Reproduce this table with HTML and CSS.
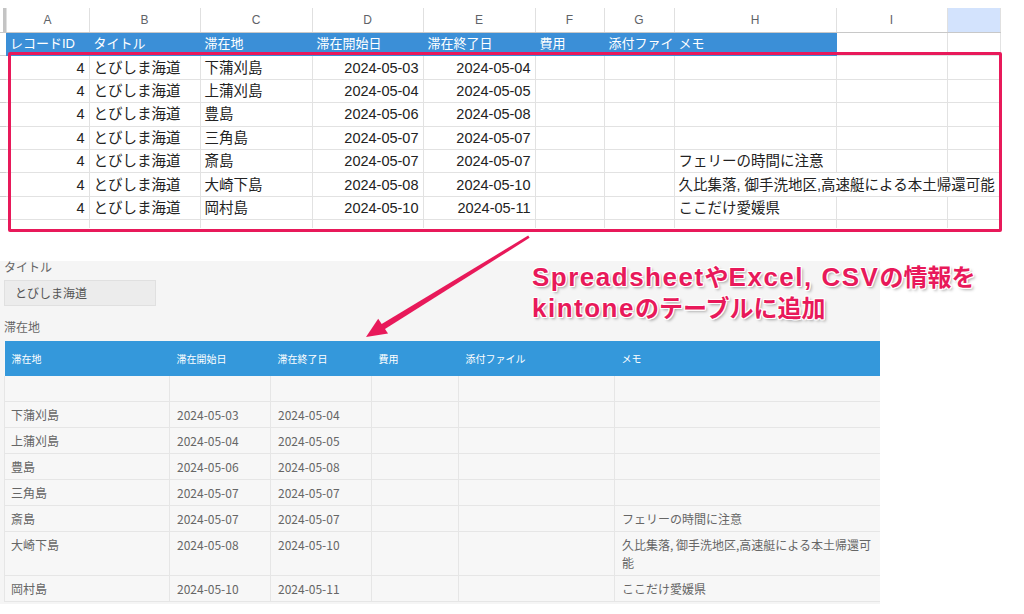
FILE: index.html
```html
<!DOCTYPE html>
<html lang="ja">
<head>
<meta charset="utf-8">
<link rel="stylesheet" href="styles.css">
</head>
<body>
<div class="page">
  <table class="sheet">
    <colgroup>
      <col style="width:6px"><col style="width:83px"><col style="width:111px"><col style="width:112px"><col style="width:111px"><col style="width:112px"><col style="width:69px"><col style="width:70px"><col style="width:162px"><col style="width:111px"><col style="width:53px"><col style="width:24px">
    </colgroup>
    <tr class="letters">
      <td class="stub stub-head"></td><td>A</td><td>B</td><td>C</td><td>D</td><td>E</td><td>F</td><td>G</td><td>H</td><td>I</td><td class="sel"></td><td class="void"></td>
    </tr>
    <tr class="blue">
      <td class="stub"></td><td class="bh">レコードID</td><td class="bh">タイトル</td><td class="bh">滞在地</td><td class="bh">滞在開始日</td><td class="bh">滞在終了日</td><td class="bh">費用</td><td class="bh">添付ファイル</td><td class="bh">メモ</td><td></td><td></td><td class="void"></td>
    </tr>
    <tr><td class="stub"></td><td class="r">4</td><td>とびしま海道</td><td>下蒲刈島</td><td class="r">2024-05-03</td><td class="r">2024-05-04</td><td></td><td></td><td></td><td></td><td></td><td class="void"></td></tr>
    <tr><td class="stub"></td><td class="r">4</td><td>とびしま海道</td><td>上蒲刈島</td><td class="r">2024-05-04</td><td class="r">2024-05-05</td><td></td><td></td><td></td><td></td><td></td><td class="void"></td></tr>
    <tr><td class="stub"></td><td class="r">4</td><td>とびしま海道</td><td>豊島</td><td class="r">2024-05-06</td><td class="r">2024-05-08</td><td></td><td></td><td></td><td></td><td></td><td class="void"></td></tr>
    <tr><td class="stub"></td><td class="r">4</td><td>とびしま海道</td><td>三角島</td><td class="r">2024-05-07</td><td class="r">2024-05-07</td><td></td><td></td><td></td><td></td><td></td><td class="void"></td></tr>
    <tr><td class="stub"></td><td class="r">4</td><td>とびしま海道</td><td>斎島</td><td class="r">2024-05-07</td><td class="r">2024-05-07</td><td></td><td></td><td>フェリーの時間に注意</td><td></td><td></td><td class="void"></td></tr>
    <tr><td class="stub"></td><td class="r">4</td><td>とびしま海道</td><td>大崎下島</td><td class="r">2024-05-08</td><td class="r">2024-05-10</td><td></td><td></td><td colspan="3" class="over">久比集落, 御手洗地区,高速艇による本土帰還可能</td><td class="void"></td></tr>
    <tr><td class="stub"></td><td class="r">4</td><td>とびしま海道</td><td>岡村島</td><td class="r">2024-05-10</td><td class="r">2024-05-11</td><td></td><td></td><td>ここだけ愛媛県</td><td></td><td></td><td class="void"></td></tr>
    <tr class="tail"><td class="stub"></td><td></td><td></td><td></td><td></td><td></td><td></td><td></td><td></td><td></td><td></td><td class="void"></td></tr>
  </table>

  <section class="kintone">
    <div class="label">タイトル</div>
    <div class="input">とびしま海道</div>
    <div class="label label-table">滞在地</div>
    <table class="ktable">
      <colgroup>
        <col style="width:165px"><col style="width:101px"><col style="width:101px"><col style="width:87px"><col style="width:156px"><col style="width:265px">
      </colgroup>
      <tr class="khead"><th>滞在地</th><th>滞在開始日</th><th>滞在終了日</th><th>費用</th><th>添付ファイル</th><th>メモ</th></tr>
      <tr><td></td><td></td><td></td><td></td><td></td><td></td></tr>
      <tr><td>下蒲刈島</td><td>2024-05-03</td><td>2024-05-04</td><td></td><td></td><td></td></tr>
      <tr><td>上蒲刈島</td><td>2024-05-04</td><td>2024-05-05</td><td></td><td></td><td></td></tr>
      <tr><td>豊島</td><td>2024-05-06</td><td>2024-05-08</td><td></td><td></td><td></td></tr>
      <tr><td>三角島</td><td>2024-05-07</td><td>2024-05-07</td><td></td><td></td><td></td></tr>
      <tr><td>斎島</td><td>2024-05-07</td><td>2024-05-07</td><td></td><td></td><td>フェリーの時間に注意</td></tr>
      <tr><td>大崎下島</td><td>2024-05-08</td><td>2024-05-10</td><td></td><td></td><td>久比集落, 御手洗地区,高速艇による本土帰還可能</td></tr>
      <tr><td>岡村島</td><td>2024-05-10</td><td>2024-05-11</td><td></td><td></td><td>ここだけ愛媛県</td></tr>
    </table>
  </section>

  <div class="highlight"></div>

  <svg class="arrow" width="1024" height="614" viewBox="0 0 1024 614">
    <polygon points="528.2,235.6 529.6,237.8 382.6,330.6 379.2,325.6" fill="#e8195a"/>
    <polygon points="366,337 378.2,318.8 388,333.6" fill="#e8195a"/>
  </svg>

  <div class="callout"><span class="lat">Spreadsheet</span><span class="jp">や</span><span class="lat">Excel, CSV</span><span class="jp">の情報を</span><br><span class="lat">kintone</span><span class="jp">のテーブルに追加</span></div>
</div>
</body>
</html>
```

FILE: styles.css
```css
html, body {
  margin: 0;
  padding: 0;
  background: #ffffff;
}

.page {
  position: relative;
  width: 1024px;
  height: 614px;
  overflow: hidden;
  padding-top: 8px;
  box-sizing: border-box;
}

/* ---------- spreadsheet ---------- */
.sheet {
  border-collapse: collapse;
  table-layout: fixed;
  width: 1024px;
  font-family: "Liberation Sans", "Noto Sans CJK JP", sans-serif;
  font-size: 14.5px;
  color: #222;
}

.sheet td {
  border-right: 1px solid #e2e2e2;
  border-bottom: 1px solid #e2e2e2;
  padding: 0 4px;
  height: 22.4px;
  white-space: nowrap;
  overflow: hidden;
  line-height: 18px;
}

.sheet td.r {
  text-align: right;
}

.sheet td.over {
  overflow: visible;
}

.sheet td.stub {
  border-right: none;
  border-bottom: 1px solid #d0d0d0;
  padding: 0;
}

.sheet td.void {
  border: none;
}

.sheet .letters td {
  height: 24px;
  text-align: center;
  font-size: 12px;
  color: #5f6368;
  border-bottom: 1px solid #c8c8c8;
  border-right: 1px solid #e0e0e0;
}

.sheet .letters td.stub-head {
  background: linear-gradient(to right, #ffffff 0 3px, #c4c4c4 3px 6px);
  border-bottom: 1px solid #c8c8c8;
}

.sheet .letters td.sel {
  background: #d3e3fd;
  border-bottom: 1px solid #c8c8c8;
}

.sheet .letters td.void {
  border: none;
}

.sheet .blue td.bh {
  background: #3b8fd7;
  color: #ffffff;
  font-size: 13px;
  border-right-color: #3b8fd7;
  border-bottom-color: #3b8fd7;
}

.sheet .tail td {
  height: 8px;
  border-bottom: none;
}

.sheet .tail td.stub {
  border-bottom: none;
}

/* ---------- highlight box ---------- */
.highlight {
  position: absolute;
  left: 8px;
  top: 52px;
  width: 994px;
  height: 180px;
  box-sizing: border-box;
  border: 3px solid #e8195a;
  border-radius: 2px;
}

/* ---------- kintone form ---------- */
.kintone {
  margin-top: 33px;
  width: 880px;
  height: 343px;
  box-sizing: border-box;
  background: #f5f5f5;
  padding-left: 4px;
  font-family: "Noto Sans CJK JP", "Liberation Sans", sans-serif;
  font-size: 12px;
  color: #666;
}

.label {
  line-height: 12px;
  height: 12px;
  margin-bottom: 7px;
  color: #666;
}

.input {
  width: 152px;
  height: 26px;
  box-sizing: border-box;
  background: #ececec;
  border: 1px solid #e0e0e0;
  padding-left: 10px;
  line-height: 24px;
  color: #555;
}

.label-table {
  margin-top: 15px;
  margin-bottom: 8px;
}

.ktable {
  border-collapse: collapse;
  table-layout: fixed;
  width: 875px;
  background: #f7f7f7;
}

.ktable th {
  background: #3498db;
  color: #ffffff;
  font-weight: normal;
  font-size: 10px;
  text-align: left;
  height: 35px;
  padding: 0 7px;
  box-sizing: border-box;
}

.ktable td {
  padding: 4px 7px 3px;
  line-height: 18px;
  height: 18px;
  border-bottom: 1px solid #e6e6e6;
  border-right: 1px solid #e6e6e6;
  color: #666;
  vertical-align: top;
}

.ktable td:first-child {
  border-left: 1px solid #e6e6e6;
  padding-left: 6px;
}

.ktable td:last-child {
  border-right: none;
}

/* ---------- arrow + callout ---------- */
.arrow {
  position: absolute;
  left: 0;
  top: 0;
  pointer-events: none;
}

.callout {
  position: absolute;
  left: 532px;
  top: 261px;
  font-family: "Liberation Sans", "Noto Sans CJK JP", sans-serif;
  font-weight: bold;
  font-size: 26px;
  line-height: 29px;
  color: #e8195a;
  white-space: nowrap;
  text-shadow:
    1px 0 0 #fff, -1px 0 0 #fff, 0 1px 0 #fff, 0 -1px 0 #fff,
    1px 1px 0 #fff, -1px -1px 0 #fff, 1px -1px 0 #fff, -1px 1px 0 #fff,
    2px 2px 3px rgba(0, 0, 0, 0.35);
}

.callout .lat {
  letter-spacing: 1.5px;
}

.callout .jp {
  font-family: "Noto Sans CJK JP", sans-serif;
  font-size: 24px;
  line-height: 29px;
}
```
